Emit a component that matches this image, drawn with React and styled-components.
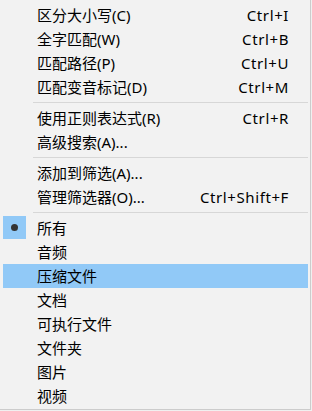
import React from 'react';
import styled, { createGlobalStyle } from 'styled-components';

const GlobalStyle = createGlobalStyle`
  html, body {
    margin: 0;
    padding: 0;
    background: #f0f0f0;
  }
  body {
    font-family: "Noto Sans", "Noto Sans CJK SC", sans-serif;
  }
`;

const Menu = styled.div`
  width: 311px;
  height: 410px;
  box-sizing: border-box;
  background: #f2f2f2;
  border-right: 1px solid #cccccc;
  border-bottom: 1px solid #cccccc;
  padding: 3px 0 0 3px;
`;

const Row = styled.div`
  display: flex;
  align-items: center;
  height: 24px;
  width: 305px;
  background: ${(p) => (p.$hover ? '#91c9f7' : 'transparent')};
  font-size: 15px;
  color: #000;
`;

const Check = styled.div`
  width: 23px;
  height: 23px;
  display: flex;
  align-items: center;
  justify-content: center;
  background: ${(p) => (p.$on ? '#91c9f7' : 'transparent')};
  flex: none;
  align-self: flex-start;
`;

const Dot = styled.span`
  width: 7px;
  height: 7px;
  border-radius: 50%;
  background: #333;
`;

const Label = styled.span`
  margin-left: 11px;
  flex: 1;
  white-space: nowrap;
  line-height: 24px;
`;

const Shortcut = styled.span`
  margin-right: 19px;
  white-space: nowrap;
  line-height: 24px;
  letter-spacing: 0.6px;
`;

const Separator = styled.div`
  height: 7px;
  display: flex;
  align-items: center;
  padding-left: 30px;
  width: 275px;

  &::after {
    content: '';
    flex: 1;
    height: 1px;
    background: #d7d7d7;
  }
`;

const sections = [
  [
    ['区分大小写(C)', 'Ctrl+I'],
    ['全字匹配(W)', 'Ctrl+B'],
    ['匹配路径(P)', 'Ctrl+U'],
    ['匹配变音标记(D)', 'Ctrl+M'],
  ],
  [
    ['使用正则表达式(R)', 'Ctrl+R'],
    ['高级搜索(A)...', ''],
  ],
  [
    ['添加到筛选(A)...', ''],
    ['管理筛选器(O)...', 'Ctrl+Shift+F'],
  ],
];

const filters = ['所有', '音频', '压缩文件', '文档', '可执行文件', '文件夹', '图片', '视频'];

const App = () => {
  return (
    <>
      <GlobalStyle />
      <Menu>
        {sections.map((items, i) => (
          <React.Fragment key={i}>
            {items.map(([label, key]) => (
              <Row key={label}>
                <Check />
                <Label>{label}</Label>
                {key && <Shortcut>{key}</Shortcut>}
              </Row>
            ))}
            <Separator />
          </React.Fragment>
        ))}
        {filters.map((name, i) => (
          <Row key={name} $hover={name === '压缩文件'}>
            <Check $on={i === 0}>{i === 0 && <Dot />}</Check>
            <Label>{name}</Label>
          </Row>
        ))}
      </Menu>
    </>
  );
};

export default App;
